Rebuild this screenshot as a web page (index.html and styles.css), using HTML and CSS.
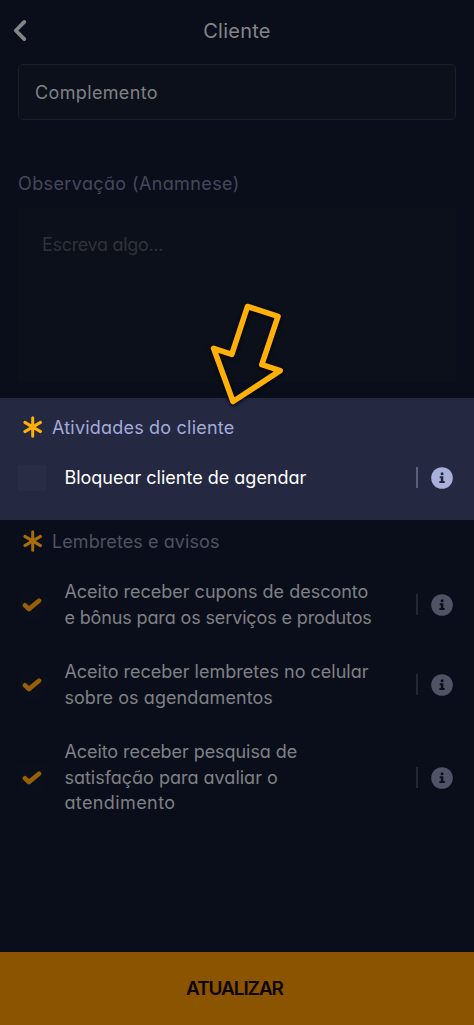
FILE: index.html
```html
<!DOCTYPE html>
<html lang="pt-BR">
<head>
<meta charset="utf-8">
<meta name="viewport" content="width=device-width, initial-scale=1">
<title>Cliente</title>
<link rel="stylesheet" href="styles.css">
</head>
<body>
<svg class="symbols" aria-hidden="true">
  <symbol id="info" viewBox="0 0 22 22">
    <circle cx="11" cy="11" r="10.8" fill="currentColor"/>
    <circle class="info-mark" cx="11.1" cy="6.7" r="1.5"/>
    <path class="info-mark" d="M8.7 9.3h3.6v4.7h1.4v2H8.4v-2h1.5v-2.7H8.7z"/>
  </symbol>
  <symbol id="asterisk" viewBox="0 0 20 22">
    <path d="M9.7 1.7v18.6M1.9 6.4l15.6 9.2M17.5 6.4 1.9 15.6" fill="none" stroke="currentColor" stroke-width="3" stroke-linecap="round"/>
  </symbol>
  <symbol id="check" viewBox="0 0 20 16">
    <path d="M2.9 8.3 7 12.1 17 3.7" fill="none" stroke="currentColor" stroke-width="4.6" stroke-linecap="round" stroke-linejoin="round"/>
  </symbol>
</svg>
<div class="screen">
  <header class="topbar">
    <svg class="back" viewBox="0 0 14 24"><path d="M11.3 2.9 2.8 11.5l8.5 8.6" fill="none" stroke="currentColor" stroke-width="3.8" stroke-linecap="round" stroke-linejoin="round"/></svg>
    <h1 class="title">Cliente</h1>
  </header>
  <main class="form">
    <div class="field"><span class="t-complemento">Complemento</span></div>
    <h2 class="label"><span class="t-obs">Observação (Anamnese)</span></h2>
    <div class="textarea"><span class="t-escreva">Escreva algo...</span></div>
    <section class="group highlight">
      <h2 class="heading"><svg class="asterisk"><use href="#asterisk"/></svg><span class="t-atividades">Atividades do cliente</span></h2>
      <div class="option">
        <span class="box"></span>
        <p class="text"><span class="t-bloquear">Bloquear cliente de agendar</span></p>
        <span class="divider"></span>
        <svg class="info"><use href="#info"/></svg>
      </div>
      <svg class="arrow" viewBox="0 0 90 115"><path d="M47.5 11.5 78 21.3 61.8 69.7 80.2 75.6 33 106.5 13.6 53.3 31.8 59.4z" fill="none" stroke="#ffb006" stroke-width="5.6" stroke-linejoin="round"/></svg>
    </section>
    <section class="group dimmed">
      <h2 class="heading"><svg class="asterisk"><use href="#asterisk"/></svg><span class="t-lembretes">Lembretes e avisos</span></h2>
      <div class="option two">
        <span class="box"><svg class="check"><use href="#check"/></svg></span>
        <p class="text"><span class="t-cupons">Aceito receber cupons de desconto</span><span class="t-bonus">e bônus para os serviços e produtos</span></p>
        <span class="divider"></span>
        <svg class="info"><use href="#info"/></svg>
      </div>
      <div class="option two">
        <span class="box"><svg class="check"><use href="#check"/></svg></span>
        <p class="text"><span class="t-celular">Aceito receber lembretes no celular</span><span class="t-sobre">sobre os agendamentos</span></p>
        <span class="divider"></span>
        <svg class="info"><use href="#info"/></svg>
      </div>
      <div class="option three">
        <span class="box"><svg class="check"><use href="#check"/></svg></span>
        <p class="text"><span class="t-pesquisa">Aceito receber pesquisa de</span><span class="t-satisfacao">satisfação para avaliar o</span><span class="t-atendimento">atendimento</span></p>
        <span class="divider"></span>
        <svg class="info"><use href="#info"/></svg>
      </div>
    </section>
  </main>
  <button class="submit"><span class="t-atualizar">ATUALIZAR</span></button>
</div>
</body>
</html>
```
FILE: styles.css
```css
* { box-sizing: border-box; margin: 0; padding: 0; }
body {
  background: #0a0e1a;
  color: #808085;
  font: 400 18px/25.5px Inter, "Liberation Sans", sans-serif;
  font-feature-settings: "cv11";
}
h1, h2 { font-size: inherit; font-weight: 400; }
.symbols { position: absolute; width: 0; height: 0; }
.screen { height: 1025px; display: flex; flex-direction: column; overflow: hidden; }
.topbar {
  height: 62px;
  flex: none;
  display: grid;
  grid-template-columns: 46px 1fr 46px;
  align-items: center;
  border-bottom: 1px solid #0c0f18;
}
.back { width: 14px; height: 24px; margin-left: 13px; color: #858587; }
.title { text-align: center; font-size: 20px; line-height: 26px; letter-spacing: .25px; color: #858589; }
.form { flex: 1; display: flex; flex-direction: column; }
.field {
  height: 56px;
  margin: 2px 18px 0;
  padding: 2px 16px 0;
  display: flex;
  align-items: center;
  border: 1px solid #1b1e27;
  border-radius: 5px;
  background: #0c101b;
}
.label { margin: 51px 18px 0; color: #45485a; }
.textarea {
  height: 175px;
  margin: 11px 18px 0;
  padding: 24px 24px;
  border-radius: 4px;
  background: #0c101a;
  color: #303239;
}
.group { padding: 0 20px 0 18px; }
.highlight {
  --mark: #20243c;
  position: relative;
  height: 122px;
  margin-top: 15px;
  padding-top: 17px;
  background: #242841;
  color: #fff;
}
.dimmed { --mark: #0b0e1a; padding-top: 9px; }
.heading { display: flex; align-items: center; gap: 9px; padding-left: 5px; color: #505263; }
.highlight .heading { color: #a3abd9; }
.asterisk { width: 20px; height: 22px; color: #a86c08; }
.highlight .asterisk { color: #ffb006; }
.option { display: flex; align-items: center; }
.highlight .option { margin-top: 24.5px; }
.two { height: 51px; margin-bottom: 29px; }
.dimmed .heading + .option { margin-top: 25px; }
.three { height: 77px; }
.box { width: 28px; height: 26px; display: grid; place-items: center; background: #0b0f1b; }
.highlight .box { background: #292c45; }
.check { width: 20px; height: 16px; color: #986006; }
.text { flex: 1; padding-left: 18.4px; }
.text span { display: block; white-space: nowrap; }
.divider { width: 2px; height: 21px; margin-right: 13px; background: #242731; }
.highlight .divider { background: #5a5e7c; }
.info { width: 22px; height: 22px; color: #505266; margin-right: 1px; }
.highlight .info { color: #a9b0da; }
.info-mark { fill: var(--mark); }
.arrow { position: absolute; left: 200px; top: -102.5px; width: 90px; height: 115px; filter: drop-shadow(0 1px 2px #000); }
.submit {
  height: 73px;
  flex: none;
  border: 0;
  padding-right: 5px;
  background: #8b5400;
  color: #0c0502;
  font: 600 19px/26px Inter, "Liberation Sans", sans-serif;
}

/* Optical tracking */
.t-complemento { letter-spacing: .36px; }
.t-obs { letter-spacing: .38px; }
.t-escreva { letter-spacing: -.32px; }
.t-atividades { letter-spacing: .2px; }
.t-lembretes { letter-spacing: .08px; }
.t-bonus { letter-spacing: -.13px; }
.t-sobre { letter-spacing: .08px; }
.t-pesquisa { letter-spacing: -.06px; }
.t-atendimento { letter-spacing: .4px; }
.t-atualizar { letter-spacing: -1.1px; }
```
